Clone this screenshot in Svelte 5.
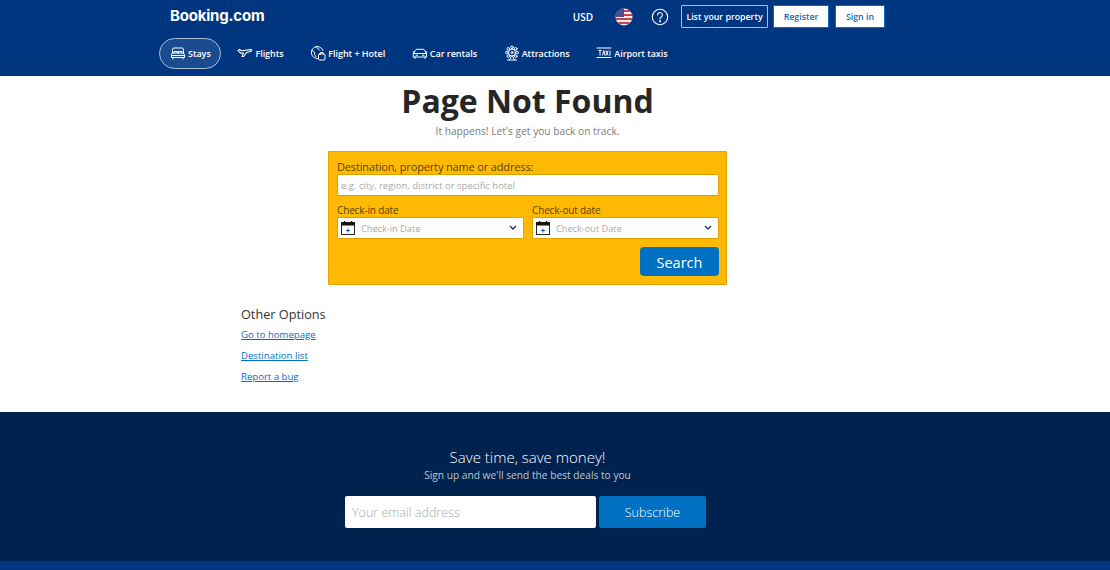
<script lang="ts">
  const tabs = [
    { label: 'Stays', icon: 'bed', active: true },
    { label: 'Flights', icon: 'plane', active: false },
    { label: 'Flight + Hotel', icon: 'globe', active: false },
    { label: 'Car rentals', icon: 'car', active: false },
    { label: 'Attractions', icon: 'ferris', active: false },
    { label: 'Airport taxis', icon: 'taxi', active: false }
  ];
  const dates = [
    { label: 'Check-in date', placeholder: 'Check-in Date' },
    { label: 'Check-out date', placeholder: 'Check-out Date' }
  ];
  const links = ['Go to homepage', 'Destination list', 'Report a bug'];
</script>

<header>
  <div class="top">
    <span class="logo">Booking.com</span>
    <div class="actions">
      <span class="currency">USD</span>
      <svg class="flag" viewBox="0 0 18 18" width="18" height="18">
        <defs><clipPath id="flag-clip"><circle cx="9" cy="9" r="8.5" /></clipPath></defs>
        <g clip-path="url(#flag-clip)">
          <rect width="18" height="18" fill="#f0f0f0" />
          <rect y="2" width="18" height="2" fill="#c8434f" />
          <rect y="6" width="18" height="2" fill="#c8434f" />
          <rect y="10" width="18" height="2" fill="#c8434f" />
          <rect y="14" width="18" height="2" fill="#c8434f" />
          <rect width="9" height="9" fill="#4a4f8c" />
        </g>
      </svg>
      <svg class="help" viewBox="0 0 18 18" width="18" height="18" fill="none" stroke="#fff" stroke-width="1.1">
        <circle cx="9" cy="9" r="7.7" />
        <path d="M6.6 7a2.4 2.4 0 1 1 3.7 2c-.9.6-1.3 1-1.3 2" stroke-linecap="round" />
        <circle cx="9" cy="13.2" r=".5" fill="#fff" />
      </svg>
      <button class="list">List your property</button>
      <button class="light register">Register</button>
      <button class="light signin">Sign in</button>
    </div>
  </div>
  <nav>
    {#each tabs as tab}
      <span class="tab" class:active={tab.active}>
        <svg viewBox="0 0 16 16" width="16" height="16" fill="none" stroke="#fff" stroke-width="1" stroke-linejoin="round" stroke-linecap="round">
          {#if tab.icon === 'bed'}
            <path d="M2.5 8V4.5A1.5 1.5 0 0 1 4 3h8a1.5 1.5 0 0 1 1.5 1.500V8" />
            <path d="M4 8V6.500h3.500V8M8.500 8V6.500H12V8" />
            <path d="M2.500 8h11l1 2v2.500h-13V10zM1.500 10.500h13M3 12.500V14M13 12.500V14" />
          {:else if tab.icon === 'plane'}
            <path d="M1 5.500l2.500 2.700 3-.4-1.500 3.700h1.500l3.500-4.300 3.500-.7c1.800-.4 1.800-2-.2-1.900L4.500 5.800 2.500 4.500z" stroke-width="1.100" />
          {:else if tab.icon === 'globe'}
            <path d="M7.500 13.500a6 6 0 1 1 5.500-8" />
            <path d="M2 5.500c2 .5 3 2 2.500 3.500s1.500 1 1.500 2.500M6 2c1 1.500 3 1.500 3.500 3" />
            <rect x="8.500" y="9" width="6.500" height="6" rx="1" />
            <path d="M10.500 9V7.500h2.500V9" />
          {:else if tab.icon === 'car'}
            <path d="M1.500 8.500l2-3.500c.3-.5.700-.7 1.200-.7h6.600c.5 0 .9.200 1.200.7l2 3.500v3.500h-13z" />
            <path d="M1.500 8.500h13M1 7h1.500M13.500 7H15M3 12v1.500M13 12v1.500M4 10.200h1.500M10.500 10.200H12" />
          {:else if tab.icon === 'ferris'}
            <circle cx="8" cy="7.500" r="3.500" />
            <circle cx="8" cy="7.500" r="1" />
            <path d="M5.500 15l2-4M10.500 15l-2-4M3.500 15h9" />
            <circle cx="8" cy="2.300" r="1.300" />
            <circle cx="2.800" cy="7.500" r="1.300" />
            <circle cx="13.200" cy="7.500" r="1.300" />
            <circle cx="4.300" cy="3.800" r="1.300" />
            <circle cx="11.700" cy="3.800" r="1.300" />
            <circle cx="4.300" cy="11.200" r="1.300" />
            <circle cx="11.700" cy="11.200" r="1.300" />
          {:else}
            <path d="M1 3h14M1 12.500h14" />
            <path d="M2.500 5.500h3M4 5.500v5M6.500 10.500l1.300-5 1.300 5M9.800 5.500l2.400 5M12.200 5.500l-2.400 5M14 5.500v5" stroke-linecap="butt" />
          {/if}
        </svg>
        <span>{tab.label}</span>
      </span>
    {/each}
  </nav>
</header>

<main>
  <h1>Page Not Found</h1>
  <p class="sub">It happens! Let's get you back on track.</p>
  <form class="search" onsubmit={(e) => e.preventDefault()}>
    <label class="dest">
      Destination, property name or address:
      <input placeholder="e.g. city, region, district or specific hotel" />
    </label>
    <div class="dates">
      {#each dates as date}
        <div class="date">
          <span class="date-label">{date.label}</span>
          <div class="date-field">
            <svg viewBox="0 0 14 14" width="14" height="14">
              <rect x=".5" y="1.500" width="13" height="12" fill="#fff" stroke="#262626" />
              <rect x=".5" y="1.500" width="13" height="3" fill="#111" />
              <rect x="3" y="0" width="1.200" height="2" fill="#111" />
              <rect x="10" y="0" width="1.200" height="2" fill="#111" />
              <path d="M7 7.500v4M5 9.500h4" stroke="#0a5ea8" stroke-width="1" />
            </svg>
            <span class="date-text">{date.placeholder}</span>
            <svg class="chev" viewBox="0 0 8 6" width="8" height="6" fill="none" stroke="#1d3a6e" stroke-width="1.400">
              <path d="M1 1l3 3 3-3" />
            </svg>
          </div>
        </div>
      {/each}
    </div>
    <div class="submit"><button>Search</button></div>
  </form>

  <section class="other">
    <h2>Other Options</h2>
    {#each links as link}
      <a href="#top">{link}</a>
    {/each}
  </section>
</main>

<section class="newsletter">
  <h3>Save time, save money!</h3>
  <p>Sign up and we'll send the best deals to you</p>
  <div class="subscribe">
    <input placeholder="Your email address" />
    <button>Subscribe</button>
  </div>
</section>
<div class="bottom"></div>

<style>
  :global(body) { margin: 0; font-family: "Open Sans", "Noto Sans", sans-serif; background: #fff; overflow: hidden; }
  header { height: 76px; background: #003580; box-sizing: border-box; padding: 0 225px 0 159px; color: #fff; }
  .top { display: flex; justify-content: space-between; align-items: center; height: 33px; padding-left: 11px; }
  .logo { font-size: 15px; font-weight: 700; letter-spacing: -.2px; font-family: "Inter", sans-serif; margin-top: -2px; }
  .actions { display: flex; align-items: center; }
  .currency { font-size: 10px; font-weight: 600; margin-right: 22px; }
  .flag { margin-right: 18px; }
  .help { margin-right: 12px; }
  .actions button { height: 23px; padding: 0; font: 600 8.800px "Open Sans", sans-serif; border-radius: 1px; box-sizing: border-box; }
  .list { width: 87px; color: #fff; background: transparent; border: 1px solid #a9bfdc; margin-right: 5px; }
  .light { background: #fff; color: #0f6cbd; border: 1px solid #0071c2; }
  .register { width: 56px; margin-right: 6px; }
  .signin { width: 50px; }
  nav { display: flex; align-items: center; height: 32px; margin-top: 4px; }
  .tab { display: flex; align-items: center; gap: 1px; height: 31px; font-size: 9px; font-weight: 600; letter-spacing: -.04px; padding: 0 9px 0 10px; margin-right: 5.700px; box-sizing: border-box; border: 1px solid transparent; border-radius: 16px; }
  .tab svg { margin-right: 1px; }
  .tab.active { background: #1a4a8f; border-color: #a9bfdc; }
  main { height: 336px; box-sizing: border-box; position: relative; padding-top: 4px; color: #262626; }
  h1 { margin: 0; height: 43px; line-height: 41px; text-align: center; font-size: 32px; font-weight: 700; width: 1055px; color: #262626; }
  .sub { margin: 0; width: 1055px; text-align: center; font-size: 10.200px; color: #7c7c7c; line-height: 16px; }
  .search { width: 399px; height: 134px; margin: 12px 0 0 328px; box-sizing: border-box; background: #feba02; border: 1px solid #e8a100; border-radius: 1px; padding: 8px 7px 0 8px; color: #5a4300; font-size: 11px; letter-spacing: -.15px; }
  .dest { display: block; line-height: 14px; }
  .dest input { display: block; width: 100%; height: 22px; box-sizing: border-box; margin-top: 0; border: 1px solid #e0a000; border-radius: 2px; padding: 0 3px; font: 9.500px "Open Sans", sans-serif; outline: none; }
  input::placeholder { color: #a9a9a9; opacity: 1; }
  .dates { display: flex; gap: 8px; margin-top: 7px; }
  .date { flex: 1; }
  .date-label { display: block; font-size: 10px; line-height: 14px; }
  .date-field { display: flex; align-items: center; height: 22px; background: #fff; border: 1px solid #e0a000; border-radius: 2px; box-sizing: border-box; padding: 0 6px 0 3px; }
  .date-text { flex: 1; margin-left: 6px; font-size: 9.200px; letter-spacing: 0; color: #a9a9a9; }
  .submit { display: flex; justify-content: flex-end; margin-top: 8px; }
  .submit button { width: 79px; height: 29px; border: 0; border-radius: 4px; background: #0071c2; color: #fff; font: 14.500px/31px "Open Sans", sans-serif; padding: 0; }
  .other { margin: 20px 0 0 241px; display: flex; flex-direction: column; align-items: flex-start; }
  h2 { margin: 0 0 1px; font-size: 12.700px; font-weight: 400; line-height: 18px; color: #333; }
  .other a { font-size: 9.600px; line-height: 21px; color: #0071c2; }
  .newsletter { height: 149px; box-sizing: border-box; background: #00224f; padding-top: 35px; color: #fff; text-align: center; width: 100%; }
  .newsletter > * { width: 1055px; }
  h3 { margin: 0; font-size: 15px; font-weight: 300; line-height: 21px; }
  .newsletter p { margin: 0; font-size: 10.200px; line-height: 15px; color: #bcc6d4; }
  .newsletter .subscribe { width: 1051px; display: flex; justify-content: center; gap: 3px; margin-top: 13px; }
  .subscribe input { width: 251px; height: 32px; box-sizing: border-box; border: 0; border-radius: 2px; padding: 0 7px; font: 300 12.500px "Open Sans", sans-serif; }
  .subscribe button { width: 107px; height: 32px; border: 0; border-radius: 2px; background: #0071c2; color: #fff; font: 300 12.500px "Open Sans", sans-serif; }
  .bottom { height: 9px; background: #003580; }
</style>
